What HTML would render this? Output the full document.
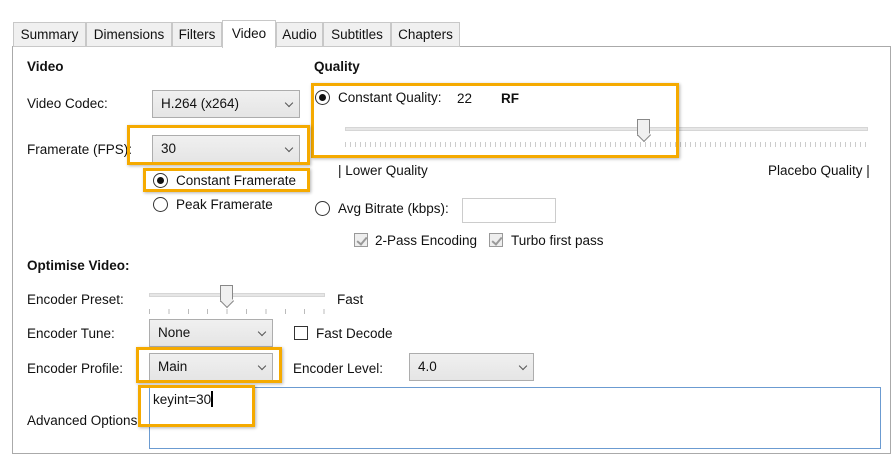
<!DOCTYPE html>
<html><head><style>
*{box-sizing:border-box;margin:0;padding:0}
body{width:896px;height:460px;background:#fff;font-family:"Liberation Sans",sans-serif;font-size:13.5px;color:#111;position:relative;overflow:hidden}
.a{position:absolute;white-space:nowrap}
.tab{position:absolute;top:22px;height:25px;border:1px solid #c8c8c8;background:#f0f0f0;text-align:center;line-height:23px;font-size:13.5px}
.panel{position:absolute;left:12px;top:46px;width:879px;height:408px;border:1px solid #aaa}
.b{font-weight:bold}
.sel{position:absolute;height:28px;border:1px solid #adadad;background:linear-gradient(#f0f0f0,#e5e5e5);padding-left:8px;line-height:26px}
.sel:after{content:"";position:absolute;right:7px;top:9px;width:5px;height:5px;border-right:1px solid #555;border-bottom:1px solid #555;transform:rotate(45deg)}
.rad{position:absolute;width:15px;height:15px;border:1px solid #333;border-radius:50%;background:#fff}
.rad.on:after{content:"";position:absolute;left:3px;top:3px;width:7px;height:7px;border-radius:50%;background:#111}
.chk{position:absolute;width:14px;height:14px;border:1px solid #999;background:#eee}
.chk.on:after{content:"";position:absolute;left:4px;top:1px;width:4px;height:8px;border-right:2px solid #999;border-bottom:2px solid #999;transform:rotate(40deg)}
.track{position:absolute;height:4px;background:#e6e6e6;border:1px solid #d6d6d6}
.thumb{position:absolute;width:13px;height:17px;background:#f0f0f0;border:1px solid #888;border-bottom:none}
.thumb:after{content:"";position:absolute;left:1px;top:10px;width:9px;height:9px;background:#f0f0f0;border-right:1px solid #888;border-bottom:1px solid #888;transform:rotate(45deg)}
.ticks{position:absolute;height:5px}
.ob{position:absolute;border:3px solid #f5aa00;box-shadow:1px 1px 3px rgba(0,0,0,.3)}
</style></head><body>
<div class="panel"></div>
<div class="tab" style="left:13px;width:73px">Summary</div>
<div class="tab" style="left:86px;width:86px">Dimensions</div>
<div class="tab" style="left:172px;width:50px">Filters</div>
<div class="tab" style="left:222px;top:20px;height:28px;width:54px;background:#fff;border-bottom:none;line-height:26px">Video</div>
<div class="tab" style="left:276px;width:47px">Audio</div>
<div class="tab" style="left:323px;width:68px">Subtitles</div>
<div class="tab" style="left:391px;width:69px">Chapters</div>

<div class="a b" style="left:27px;top:59px">Video</div>
<div class="a b" style="left:314px;top:59px">Quality</div>

<div class="a" style="left:27px;top:96px">Video Codec:</div>
<div class="sel" style="left:152px;top:90px;width:148px">H.264 (x264)</div>
<div class="a" style="left:27px;top:142px">Framerate (FPS):</div>
<div class="sel" style="left:152px;top:135px;width:148px">30</div>
<div class="rad on" style="left:153px;top:173px"></div>
<div class="a" style="left:176px;top:173px">Constant Framerate</div>
<div class="rad" style="left:153px;top:197px"></div>
<div class="a" style="left:176px;top:197px">Peak Framerate</div>

<div class="rad on" style="left:315px;top:90px"></div>
<div class="a" style="left:338px;top:90px">Constant Quality:</div>
<div class="a" style="left:457px;top:91px">22</div>
<div class="a b" style="left:501px;top:91px">RF</div>
<div class="track" style="left:345px;top:127px;width:523px"></div>
<div class="ticks" style="left:345px;top:142px;width:523px;background:repeating-linear-gradient(90deg,#ccc 0 1px,transparent 1px 5px)"></div>
<div class="thumb" style="left:637px;top:119px"></div>
<div class="a" style="left:338px;top:163px">| Lower Quality</div>
<div class="a" style="left:768px;top:163px">Placebo Quality |</div>
<div class="rad" style="left:315px;top:201px"></div>
<div class="a" style="left:338px;top:201px">Avg Bitrate (kbps):</div>
<div style="position:absolute;left:462px;top:198px;width:94px;height:25px;border:1px solid #ccc"></div>
<div class="chk on" style="left:354px;top:233px"></div>
<div class="a" style="left:375px;top:233px">2-Pass Encoding</div>
<div class="chk on" style="left:489px;top:233px"></div>
<div class="a" style="left:511px;top:233px">Turbo first pass</div>

<div class="a b" style="left:27px;top:258px">Optimise Video:</div>
<div class="a" style="left:27px;top:292px">Encoder Preset:</div>
<div class="track" style="left:149px;top:293px;width:176px"></div>
<div class="ticks" style="left:149px;top:309px;width:176px;background:repeating-linear-gradient(90deg,#bbb 0 1px,transparent 1px 19.4px)"></div>
<div class="thumb" style="left:220px;top:285px"></div>
<div class="a" style="left:337px;top:292px">Fast</div>
<div class="a" style="left:27px;top:326px">Encoder Tune:</div>
<div class="sel" style="left:149px;top:319px;width:124px">None</div>
<div class="chk" style="left:294px;top:326px;background:#fff;border-color:#333"></div>
<div class="a" style="left:316px;top:326px">Fast Decode</div>
<div class="a" style="left:27px;top:361px">Encoder Profile:</div>
<div class="sel" style="left:149px;top:353px;width:124px">Main</div>
<div class="a" style="left:293px;top:361px">Encoder Level:</div>
<div class="sel" style="left:409px;top:353px;width:125px">4.0</div>
<div class="a" style="left:27px;top:413px">Advanced Options:</div>
<div style="position:absolute;left:149px;top:387px;width:732px;height:62px;border:1px solid #6b9bd1;background:#fff"></div>
<div class="a" style="left:153px;top:391px">keyint=30<span style="display:inline-block;width:2px;height:16px;background:#000;vertical-align:-3px"></span></div>

<div class="ob" style="left:311px;top:83px;width:368px;height:75px"></div>
<div class="ob" style="left:127px;top:125px;width:183px;height:40px"></div>
<div class="ob" style="left:143px;top:168px;width:167px;height:24px"></div>
<div class="ob" style="left:136px;top:347px;width:146px;height:36px"></div>
<div class="ob" style="left:138px;top:385px;width:117px;height:42px"></div>
</body></html>
